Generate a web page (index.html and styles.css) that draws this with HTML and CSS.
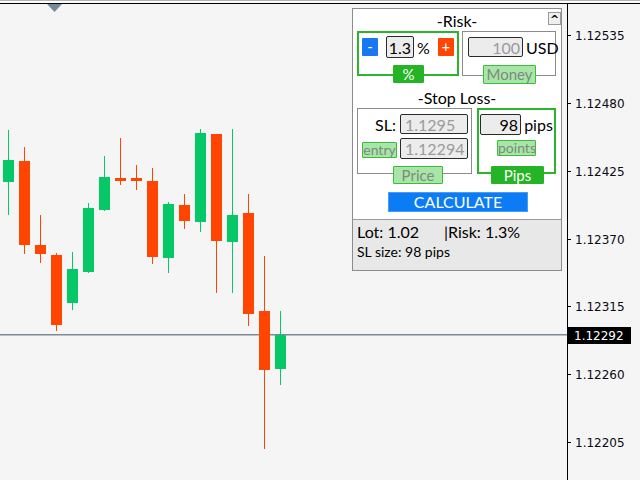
FILE: index.html
```html
<!DOCTYPE html>
<html>
<head>
<meta charset="utf-8">
<link rel="stylesheet" href="styles.css">
</head>
<body>
<div class="screen">
  <svg class="chart" width="640" height="480" viewBox="0 0 640 480" xmlns="http://www.w3.org/2000/svg">
    <rect x="0" y="0" width="640" height="1" fill="#b4b4b4"/>
    <rect x="0" y="1" width="640" height="2" fill="#ffffff"/>
    <rect x="0" y="3" width="640" height="1" fill="#000000"/>
    <polygon points="47,4 62,4 54.5,12" fill="#778899"/>
    <rect x="0" y="334" width="568" height="1.5" fill="#7f8a96"/>
    <g id="candles"></g>
    <rect x="567" y="3" width="1" height="477" fill="#000"/>
    <g fill="#000">
      <rect x="567" y="35" width="4" height="1"/>
      <rect x="567" y="103" width="4" height="1"/>
      <rect x="567" y="171" width="4" height="1"/>
      <rect x="567" y="239" width="4" height="1"/>
      <rect x="567" y="306" width="4" height="1"/>
      <rect x="567" y="374" width="4" height="1"/>
      <rect x="567" y="442" width="4" height="1"/>
    </g>
    <g class="axis-text">
      <text x="575" y="40">1.12535</text>
      <text x="575" y="108">1.12480</text>
      <text x="575" y="176">1.12425</text>
      <text x="575" y="244">1.12370</text>
      <text x="575" y="311">1.12315</text>
      <text x="575" y="379">1.12260</text>
      <text x="575" y="447">1.12205</text>
    </g>
    <rect x="568" y="327" width="63" height="17" fill="#000"/>
    <text class="axis-text cur" x="574" y="340">1.12292</text>
  </svg>

  <div class="panel">
    <div class="title">-Risk-</div>
    <div class="collapse">^</div>
    <div class="row">
      <div class="box box-green risk-pct">
        <div class="line pct-line">
          <span class="sq sq-blue">-</span>
          <input class="field f-pct" value="1.3" readonly>
          <span class="unit">%</span>
          <span class="sq sq-red">+</span>
        </div>
        <div class="btn btn-on btn-pct">%</div>
      </div>
      <div class="box box-gray risk-money">
        <div class="line money-line">
          <input class="field f-money dim" value="100" readonly>
          <span class="unit">USD</span>
        </div>
        <div class="btn btn-off btn-money">Money</div>
      </div>
    </div>

    <div class="title title-sl">-Stop Loss-</div>
    <div class="row row-sl">
      <div class="box box-gray sl-price">
        <div class="sl-grid">
          <span class="lbl">SL:</span>
          <input class="field f-sl dim" value="1.1295" readonly>
          <div class="btn btn-off btn-entry">entry</div>
          <input class="field f-entry dim" value="1.12294" readonly>
        </div>
        <div class="btn btn-off btn-price">Price</div>
      </div>
      <div class="box box-green sl-pips">
        <div class="line pips-line">
          <input class="field f-pips" value="98" readonly>
          <span class="unit">pips</span>
        </div>
        <div class="btn btn-off btn-points">points</div>
        <div class="btn btn-on btn-pips">Pips</div>
      </div>
    </div>

    <div class="calc">CALCULATE</div>

    <div class="results">
      <div class="res-1"><span class="lot">Lot: 1.02</span><span class="risk">|Risk: 1.3%</span></div>
      <div class="res-2">SL size: 98 pips</div>
    </div>
  </div>
</div>
<script src="chart.js"></script>
</body>
</html>
```

FILE: chart.js
```js
(function () {
  var G = "#06c866", R = "#ff4500";
  var c = [
    [3,160,182,130,215,G],[19,161,245,147,254,R],[35,245,254,215,263,R],
    [51,255,325,253,331,R],[67,269,303,252,310,G],[83,208,272,203,273,G],
    [99,177,210,156,211,G],[115,178,181,138,185,R],[131,178,181,165,190,R],
    [147,181,257,168,264,R],[163,204,258,202,273,G],[179,205,221,194,229,R],
    [195,133,222,129,232,G],[211,134,241,134,293,R],[227,215,242,129,293,G],
    [243,213,314,194,326,R],[259,311,370,256,449,R],[275,335,369,311,385,G]
  ];
  var ns = "http://www.w3.org/2000/svg";
  var g = document.getElementById("candles");
  function r(x, y, w, h, f) {
    var e = document.createElementNS(ns, "rect");
    e.setAttribute("x", x); e.setAttribute("y", y);
    e.setAttribute("width", w); e.setAttribute("height", h);
    e.setAttribute("fill", f);
    g.appendChild(e);
  }
  c.forEach(function (k) {
    r(k[0] + 5, k[3], 1, k[4] - k[3], k[5]);
    r(k[0], k[1], 11, k[2] - k[1], k[5]);
  });
})();
```

FILE: styles.css
```css
html, body {
  margin: 0;
  padding: 0;
  background: #f5f5f5;
}

.screen {
  position: relative;
  width: 640px;
  height: 480px;
  overflow: hidden;
  background: #f5f5f5;
}

.chart {
  display: block;
}

.axis-text {
  font-family: "DejaVu Sans", sans-serif;
  font-size: 12px;
  fill: #0a0a14;
}

.axis-text.cur {
  fill: #ffffff;
}

.panel {
  position: absolute;
  left: 352px;
  top: 8px;
  width: 210px;
  height: 263px;
  box-sizing: border-box;
  border: 1px solid #8c8c8c;
  background: #ffffff;
  display: flex;
  flex-direction: column;
  font-family: Lato, "Liberation Sans", sans-serif;
  color: #000;
}

.title {
  height: 22px;
  box-sizing: border-box;
  padding-top: 2px;
  line-height: 19px;
  font-size: 16px;
  text-align: center;
}

.title-sl {
  height: 32px;
  padding-top: 12px;
  line-height: 20px;
}

.collapse {
  position: absolute;
  right: 0;
  top: 3px;
  width: 13px;
  height: 13px;
  box-sizing: border-box;
  border: 1px solid #9a9a9a;
  background: #efefef;
  font-family: "DejaVu Sans", sans-serif;
  font-size: 11px;
  font-weight: bold;
  line-height: 13px;
  text-align: center;
}

.row {
  display: flex;
  gap: 3px;
  padding-left: 4px;
}

.row-sl {
  gap: 5px;
}

.box {
  box-sizing: border-box;
  display: flex;
  flex-direction: column;
  align-items: center;
}

.box-green {
  border: 2px solid #2cb42c;
}

.box-gray {
  border: 1px solid #8c8c8c;
}

.risk-pct {
  width: 102px;
  height: 45px;
  padding-top: 3px;
}

.risk-money {
  width: 94px;
  height: 45px;
  padding-top: 5px;
  align-items: flex-start;
  padding-left: 5px;
}

.line {
  display: flex;
  align-items: center;
}

.pct-line {
  height: 22px;
}

.sq {
  width: 16px;
  height: 18px;
  color: #fff;
  font-size: 15px;
  line-height: 17px;
  text-align: center;
  border-radius: 1px;
}

.sq-blue {
  background: #1778f2;
  margin-right: 8px;
}

.sq-red {
  background: #ff4500;
  margin-left: 8px;
}

.field {
  box-sizing: border-box;
  margin: 0;
  border: 1px solid #2a2a2a;
  border-radius: 2px;
  background: #ececec;
  font-family: Lato, "Liberation Sans", sans-serif;
  font-size: 16px;
  color: #000;
  text-align: right;
  padding: 0 2px 0 0;
  outline: none;
}

.field.dim {
  color: #9a9a9a;
}

.f-pct {
  width: 28px;
  height: 22px;
}

.unit {
  font-size: 16px;
  margin-left: 3px;
}

.f-money {
  width: 55px;
  height: 20px;
}

.btn {
  box-sizing: border-box;
  text-align: center;
  font-size: 15px;
  border-radius: 1px;
  flex-shrink: 0;
}

.btn-on {
  background: #25b425;
  border: 1px solid #25b425;
  color: #ffffff;
}

.btn-off {
  background: #a8e6a8;
  border: 1px solid #3cbc3c;
  color: #7d8a7d;
}

.btn-pct {
  width: 31px;
  height: 18px;
  line-height: 16px;
  margin-top: 7px;
  margin-left: 1px;
}

.btn-money {
  width: 53px;
  height: 19px;
  line-height: 17px;
  margin-top: 8px;
  margin-left: 15px;
}

.sl-price {
  width: 115px;
  height: 66px;
  padding-top: 5px;
}

.sl-grid {
  display: grid;
  grid-template-columns: 35px 68px;
  grid-template-rows: 20px 21px;
  column-gap: 3px;
  row-gap: 4px;
  align-items: center;
  margin-left: 1px;
}

.lbl {
  font-size: 16px;
  text-align: right;
  padding-right: 1px;
}

.f-sl {
  width: 68px;
  height: 20px;
  text-align: left;
  padding-left: 4px;
}

.f-entry {
  width: 68px;
  height: 21px;
  text-align: left;
  padding-left: 4px;
}

.btn-entry {
  width: 35px;
  height: 16px;
  line-height: 13px;
  font-size: 14px;
  margin-top: 2px;
}

.btn-price {
  width: 50px;
  height: 18px;
  line-height: 16px;
  margin-top: 7px;
  margin-left: 7px;
}

.sl-pips {
  width: 79px;
  height: 66px;
  padding-top: 4px;
}

.f-pips {
  width: 41px;
  height: 21px;
}

.btn-points {
  width: 39px;
  height: 16px;
  line-height: 13px;
  font-size: 14px;
  margin-top: 5px;
}

.btn-pips {
  width: 53px;
  height: 18px;
  line-height: 16px;
  margin-top: 10px;
  margin-left: 2px;
  font-size: 15px;
}

.calc {
  align-self: center;
  width: 140px;
  height: 20px;
  box-sizing: border-box;
  margin-top: 18px;
  background: #0c7cf4;
  border: 1px solid #4a9cf6;
  color: #ffffff;
  font-size: 16px;
  line-height: 18px;
  text-align: center;
  margin-left: 2px;
}

.results {
  flex: 1;
  margin-top: 7px;
  border-top: 1px solid #9a9a9a;
  background: #e8e8e8;
  padding-left: 4px;
  padding-top: 2px;
}

.res-1 {
  display: flex;
  font-size: 16px;
  line-height: 20px;
}

.lot {
  width: 87px;
}

.res-2 {
  font-size: 14px;
  line-height: 19px;
}
```
